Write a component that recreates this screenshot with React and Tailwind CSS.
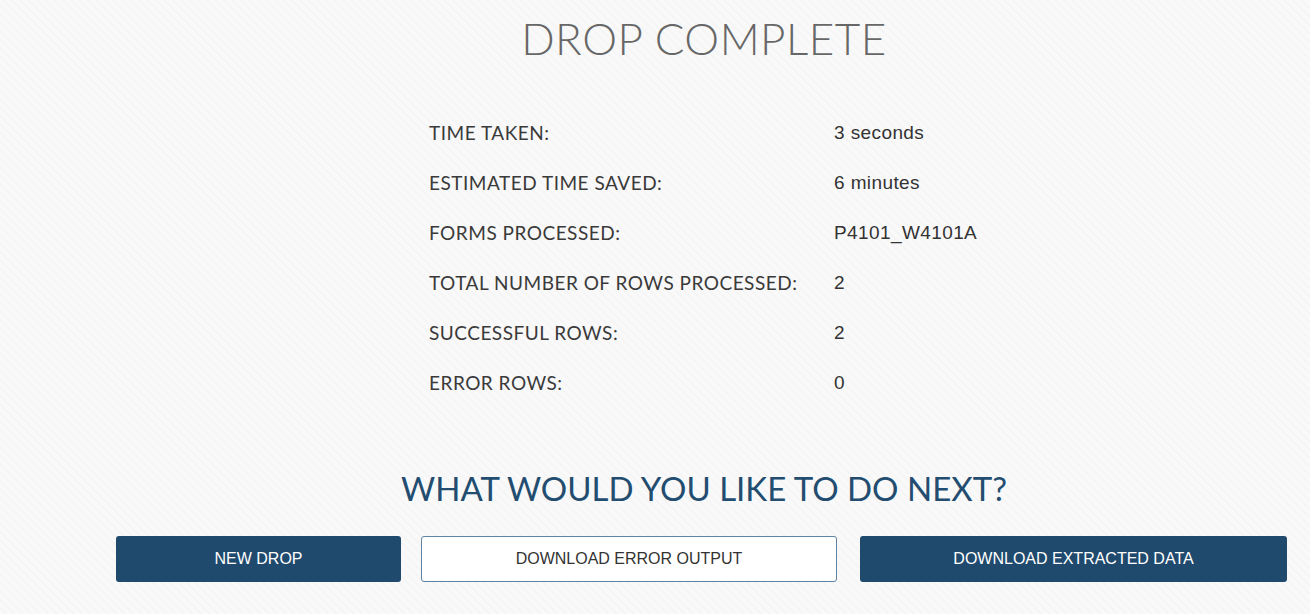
export default function App() {
  const rows = [
    ["TIME TAKEN:", "3 seconds"],
    ["ESTIMATED TIME SAVED:", "6 minutes"],
    ["FORMS PROCESSED:", "P4101_W4101A"],
    ["TOTAL NUMBER OF ROWS PROCESSED:", "2"],
    ["SUCCESSFUL ROWS:", "2"],
    ["ERROR ROWS:", "0"],
  ];
  const futura = { fontFamily: '"Lato", "Noto Sans", sans-serif' };
  return (
    <div
      className="w-[1310px] h-[614px] overflow-hidden bg-[#f8f8f8] bg-[repeating-linear-gradient(45deg,#f9f9f9_0px,#f9f9f9_3px,#f4f4f4_4px,#f9f9f9_6px)]"
    >
      <div className="ml-[98px] flex flex-col">
        <h1
          className="text-center text-[44px] font-light leading-none text-[#676767] tracking-[0.5px] pt-[16px]"
          style={futura}
        >
          DROP COMPLETE
        </h1>
        <div className="mx-auto mt-[48px] grid grid-cols-[405px_145px]">
          {rows.map(([k, v]) => (
            <div key={k} className="contents">
              <div
                className="h-[50px] flex items-center text-[19px] tracking-[0.5px] text-[#3a3a3a]"
                style={futura}
              >
                {k}
              </div>
              <div className="h-[50px] flex items-center text-[19px] tracking-[0.4px] text-[#333] font-['Liberation_Sans',sans-serif] whitespace-nowrap">
                {v}
              </div>
            </div>
          ))}
        </div>
        <h2
          className="mt-[64px] text-center text-[33px] leading-none text-[#234d70]"
          style={futura}
        >
          WHAT WOULD YOU LIKE TO DO NEXT?
        </h2>
        <div className="mt-[31px] ml-[18px] flex font-['Liberation_Sans',sans-serif] text-[16px]">
          <button className="w-[285px] h-[46px] rounded-[3px] bg-[#1f4a6d] text-white">
            NEW DROP
          </button>
          <button className="ml-[20px] w-[416px] h-[46px] rounded-[3px] border border-[#5f83a3] bg-white text-[#333]">
            DOWNLOAD ERROR OUTPUT
          </button>
          <button className="ml-[23px] w-[427px] h-[46px] rounded-[3px] bg-[#1f4a6d] text-white">
            DOWNLOAD EXTRACTED DATA
          </button>
        </div>
      </div>
    </div>
  );
}
